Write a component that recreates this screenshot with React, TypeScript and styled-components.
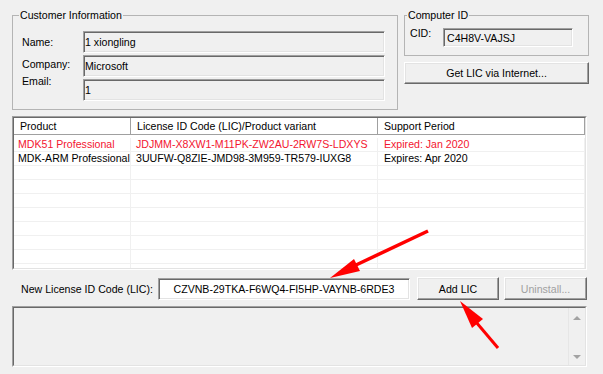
import React from 'react'
import styled, { createGlobalStyle } from 'styled-components'

const GlobalStyle = createGlobalStyle`
  html, body {
    margin: 0;
    padding: 0;
    background: #f0f0f0;
  }
  body {
    font-family: 'Liberation Sans', Arial, sans-serif;
    font-size: 10.6px;
    color: #000;
  }
`

const Window = styled.div`
  position: relative;
  width: 603px;
  height: 374px;
  box-sizing: border-box;
  padding: 9px 0 0 12px;
  background: #f0f0f0;
  overflow: hidden;
  display: flex;
  flex-direction: column;
`

const TopRow = styled.div`
  display: flex;
  gap: 6px;
  align-items: flex-start;
`

const Group = styled.fieldset<{ $width: number; $pad: string }>`
  margin: 0;
  min-width: 0;
  width: ${(p) => p.$width}px;
  box-sizing: border-box;
  padding: ${(p) => p.$pad};
  border: 1px solid #b4b4b4;
`

const Legend = styled.legend`
  padding: 0 1px;
  margin-left: -3px;
  line-height: 13px;
`

const FieldGrid = styled.div`
  display: grid;
  grid-template-columns: 61px 302px;
  grid-auto-rows: 22px;
  row-gap: 2px;
`

const FieldLabel = styled.span<{ $shift: number }>`
  align-self: start;
  margin-top: ${(p) => p.$shift}px;
  line-height: 13px;
  white-space: nowrap;
`

const TextBox = styled.input<{ $white?: boolean; $center?: boolean }>`
  box-sizing: border-box;
  width: 100%;
  height: 100%;
  margin: 0;
  padding: 0 1px;
  font: inherit;
  color: #000;
  text-align: ${(p) => (p.$center ? 'center' : 'left')};
  background: ${(p) => (p.$white ? '#fff' : '#f0f0f0')};
  border: 1px solid;
  border-color: #a0a0a0 #fff #fff #a0a0a0;
  box-shadow: inset 1px 1px 0 #696969, inset -1px -1px 0 #e3e3e3;
  outline: none;
`

const RightColumn = styled.div`
  display: flex;
  flex-direction: column;
  gap: 6px;
  width: 185px;
`

const CidRow = styled.div`
  display: flex;
  align-items: flex-start;
`

const CidLabel = styled.span`
  width: 33px;
  margin-top: -1px;
  line-height: 13px;
`

const CidBox = styled.div`
  width: 130px;
  height: 19px;
`

const Button = styled.button<{ $width: number; $height: number }>`
  width: ${(p) => p.$width}px;
  height: ${(p) => p.$height}px;
  box-sizing: border-box;
  margin: 0;
  padding: 0;
  font: inherit;
  color: #000;
  background: #f0f0f0;
  border: 1px solid;
  border-color: #fff #696969 #696969 #fff;
  box-shadow: inset -1px -1px 0 #a0a0a0, inset 1px 1px 0 #e3e3e3;

  &:disabled {
    color: #a0a0a0;
  }
`

const ListOuter = styled.div`
  margin-top: 6px;
  width: 575px;
  height: 154px;
  box-sizing: border-box;
  border: 1px solid;
  border-color: #a0a0a0 #fff #fff #a0a0a0;
`

const ListInner = styled.div`
  height: 100%;
  box-sizing: border-box;
  border: 1px solid;
  border-color: #696969 #e3e3e3 #e3e3e3 #696969;
  background: #fff;
  overflow: hidden;
`

const Columns = '117px 247px 1fr'

const HeaderRow = styled.div`
  display: grid;
  grid-template-columns: ${Columns};
  height: 17px;
`

const HeaderCell = styled.div`
  box-sizing: border-box;
  padding-left: 6px;
  line-height: 16px;
  background: #fff;
  border-right: 1px solid #a0a0a0;
  border-bottom: 1px solid #a0a0a0;
  white-space: nowrap;
  overflow: hidden;
`

const Body = styled.div`
  padding-top: 3px;
`

const Row = styled.div<{ $expired?: boolean }>`
  display: grid;
  grid-template-columns: ${Columns};
  height: 14px;
  box-sizing: border-box;
  border-bottom: 1px solid #f0f0f0;
  color: ${(p) => (p.$expired ? '#f3152f' : '#000')};
`

const Cell = styled.div<{ $pad: number }>`
  padding-left: ${(p) => p.$pad}px;
  line-height: 13px;
  border-right: 1px solid #f0f0f0;
  white-space: nowrap;
  overflow: hidden;
`

const LicRow = styled.div`
  display: flex;
  align-items: center;
  margin-top: 7px;
  height: 23px;
`

const LicLabel = styled.span`
  width: 137px;
  padding-left: 9px;
  white-space: nowrap;
`

const LicBox = styled.div`
  width: 252px;
  height: 22px;
  margin-right: 7px;
`

const ButtonGap = styled.div`
  width: 5px;
`

const OutputOuter = styled.div`
  margin-top: 6px;
  width: 575px;
  height: 61px;
  box-sizing: border-box;
  border: 1px solid;
  border-color: #a0a0a0 #fff #fff #a0a0a0;
`

const OutputInner = styled.div`
  height: 100%;
  box-sizing: border-box;
  border: 1px solid;
  border-color: #696969 #e3e3e3 #e3e3e3 #696969;
  display: flex;
  justify-content: flex-end;
`

const ScrollBar = styled.div`
  width: 17px;
  box-sizing: border-box;
  border-left: 1px solid #e6e6e6;
  display: flex;
  flex-direction: column;
  justify-content: space-between;
  align-items: center;
  padding: 8px 0 6px;
`

const ScrollArrow = styled.div<{ $down?: boolean }>`
  width: 0;
  height: 0;
  border-left: 4px solid transparent;
  border-right: 4px solid transparent;
  ${(p) => (p.$down ? 'border-top: 4px solid #a3a3a3;' : 'border-bottom: 4px solid #a3a3a3;')}
`

const Overlay = styled.svg`
  position: absolute;
  left: 0;
  top: 0;
  pointer-events: none;
`

const products = [
  {
    product: 'MDK51 Professional',
    lic: 'JDJMM-X8XW1-M11PK-ZW2AU-2RW7S-LDXYS',
    period: 'Expired: Jan 2020',
    expired: true,
  },
  {
    product: 'MDK-ARM Professional',
    lic: '3UUFW-Q8ZIE-JMD98-3M959-TR579-IUXG8',
    period: 'Expires: Apr 2020',
    expired: false,
  },
]

const customer = [
  { label: 'Name:', value: '1 xiongling', shift: 5 },
  { label: 'Company:', value: 'Microsoft', shift: 3 },
  { label: 'Email:', value: '1', shift: -4 },
]

export default function App() {
  const rows = [...products, ...Array.from({ length: 8 }, () => null)]

  return (
    <>
      <GlobalStyle />
      <Window>
        <TopRow>
          <Group $width={386} $pad="9px 12px 8px 9px">
            <Legend>Customer Information</Legend>
            <FieldGrid>
              {customer.map((c) => (
                <React.Fragment key={c.label}>
                  <FieldLabel $shift={c.shift}>{c.label}</FieldLabel>
                  <TextBox readOnly value={c.value} />
                </React.Fragment>
              ))}
            </FieldGrid>
          </Group>
          <RightColumn>
            <Group $width={185} $pad="6px 15px 8px 5px">
              <Legend>Computer ID</Legend>
              <CidRow>
                <CidLabel>CID:</CidLabel>
                <CidBox>
                  <TextBox readOnly value="C4H8V-VAJSJ" style={{ paddingLeft: 3 }} />
                </CidBox>
              </CidRow>
            </Group>
            <Button $width={185} $height={22}>Get LIC via Internet...</Button>
          </RightColumn>
        </TopRow>

        <ListOuter>
          <ListInner>
            <HeaderRow>
              <HeaderCell>Product</HeaderCell>
              <HeaderCell>License ID Code (LIC)/Product variant</HeaderCell>
              <HeaderCell>Support Period</HeaderCell>
            </HeaderRow>
            <Body>
              {rows.map((r, i) => (
                <Row key={i} $expired={r?.expired}>
                  <Cell $pad={4}>{r?.product}</Cell>
                  <Cell $pad={5}>{r?.lic}</Cell>
                  <Cell $pad={6}>{r?.period}</Cell>
                </Row>
              ))}
            </Body>
          </ListInner>
        </ListOuter>

        <LicRow>
          <LicLabel>New License ID Code (LIC):</LicLabel>
          <LicBox>
            <TextBox $white $center readOnly value="CZVNB-29TKA-F6WQ4-FI5HP-VAYNB-6RDE3" />
          </LicBox>
          <Button $width={82} $height={23}>Add LIC</Button>
          <ButtonGap />
          <Button $width={83} $height={23} disabled>
            Uninstall...
          </Button>
        </LicRow>

        <OutputOuter>
          <OutputInner>
            <ScrollBar>
              <ScrollArrow />
              <ScrollArrow $down />
            </ScrollBar>
          </OutputInner>
        </OutputOuter>

        <Overlay width={603} height={374} viewBox="0 0 603 374">
          <line x1={428} y1={231} x2={356} y2={265} stroke="#ff0000" strokeWidth={3.5} />
          <polygon points="330,278 354,259 360,271" fill="#ff0000" />
          <line x1={498} y1={348} x2={476} y2={322} stroke="#ff0000" strokeWidth={3} />
          <polygon points="460,301 483,319 472,328" fill="#ff0000" />
        </Overlay>
      </Window>
    </>
  )
}
